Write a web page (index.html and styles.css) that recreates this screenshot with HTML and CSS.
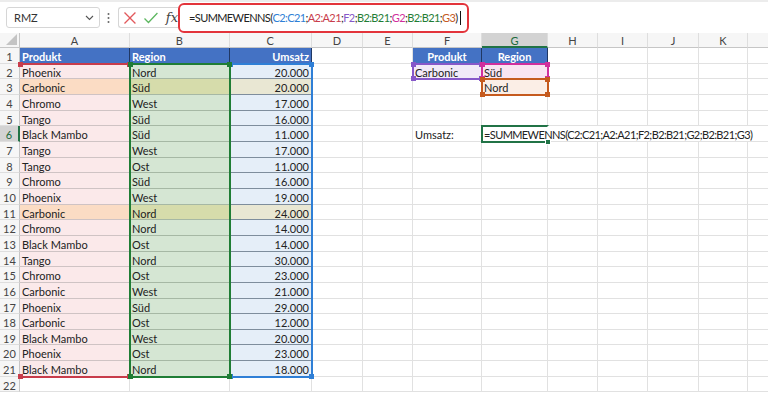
FILE: index.html
```html
<!DOCTYPE html>
<html lang="de">

<head>
    <meta charset="UTF-8">
    <meta name="viewport" content="width=device-width, initial-scale=1.0">
    <title>SUMMEWENNS</title>
    <link rel="stylesheet" href="styles.css">
</head>

<body>
    <div class="formula-bar">
        <div class="name-box">
            <span>RMZ</span>
            <svg width="9" height="6" viewBox="0 0 9 6" fill="none" stroke="#555" stroke-width="1.1">
                <polyline points="1,1 4.5,4.5 8,1"></polyline>
            </svg>
        </div>
        <svg class="dots" width="3" height="12" viewBox="0 0 3 12" fill="#666">
            <circle cx="1.5" cy="2" r="1"></circle>
            <circle cx="1.5" cy="6" r="1"></circle>
            <circle cx="1.5" cy="10" r="1"></circle>
        </svg>
        <div class="fx-buttons">
            <svg width="14" height="14" viewBox="0 0 14 14" fill="none" stroke="#e2595c" stroke-width="1.3">
                <path d="M1.5 1.5 L12.5 12.5 M12.5 1.5 L1.5 12.5"></path>
            </svg>
            <svg width="16" height="14" viewBox="0 0 16 14" fill="none" stroke="#5db760" stroke-width="1.3">
                <polyline points="1.5,7.5 5.5,11.5 14.5,2"></polyline>
            </svg>
            <span class="fx">fx</span>
        </div>
        <div class="formula-input">
            <span>=SUMMEWENNS(</span><span class="ref-blue">C2:C21</span><span>;</span><span class="ref-red">A2:A21</span><span>;</span><span class="ref-purple">F2</span><span>;</span><span class="ref-green">B2:B21</span><span>;</span><span class="ref-magenta">G2</span><span>;</span><span class="ref-green">B2:B21</span><span>;</span><span class="ref-orange">G3</span><span>)</span><span class="caret"></span>
        </div>
    </div>

    <div class="sheet">
        <div class="cells" id="cells"></div>
        <div class="marks">
            <div class="range range-c"><i class="tl"></i><i class="tr"></i><i class="bl"></i><i class="br"></i></div>
            <div class="range range-a"><i class="tl"></i><i class="tr"></i><i class="bl"></i><i class="br"></i></div>
            <div class="range range-f2"><i class="tl"></i><i class="tr"></i><i class="bl"></i><i class="br"></i></div>
            <div class="range range-b"><i class="tl"></i><i class="tr"></i><i class="bl"></i><i class="br"></i></div>
            <div class="range range-g2"><i class="tl"></i><i class="tr"></i><i class="bl"></i><i class="br"></i></div>
            <div class="range range-g3"><i class="tl"></i><i class="tr"></i><i class="bl"></i><i class="br"></i></div>
            <div class="active-cell"><i class="handle"></i></div>
        </div>
    </div>

    <script>
        const sales = [
            ['Phoenix', 'Nord', '20.000'],
            ['Carbonic', 'Süd', '20.000'],
            ['Chromo', 'West', '17.000'],
            ['Tango', 'Süd', '16.000'],
            ['Black Mambo', 'Süd', '11.000'],
            ['Tango', 'West', '17.000'],
            ['Tango', 'Ost', '11.000'],
            ['Chromo', 'Süd', '16.000'],
            ['Phoenix', 'West', '19.000'],
            ['Carbonic', 'Nord', '24.000'],
            ['Chromo', 'Nord', '14.000'],
            ['Black Mambo', 'Ost', '14.000'],
            ['Tango', 'Nord', '30.000'],
            ['Chromo', 'Ost', '23.000'],
            ['Carbonic', 'West', '21.000'],
            ['Phoenix', 'Süd', '29.000'],
            ['Carbonic', 'Ost', '12.000'],
            ['Black Mambo', 'West', '20.000'],
            ['Phoenix', 'Ost', '23.000'],
            ['Black Mambo', 'Nord', '18.000']
        ];
        const highlighted = [3, 11];
        const letters = ['A', 'B', 'C', 'D', 'E', 'F', 'G', 'H', 'I', 'J', 'K', 'L'];
        const cells = document.getElementById('cells');

        function add(cls, text) {
            const div = document.createElement('div');
            div.className = 'cell ' + cls;
            if (text) div.textContent = text;
            cells.appendChild(div);
        }

        add('corner');
        letters.forEach(l => add(l === 'G' ? 'col-head sel' : 'col-head', l === 'L' ? '' : l));

        for (let r = 1; r <= 22; r++) {
            add(r === 6 ? 'row-head sel' : 'row-head', r);

            if (r === 1) {
                add('th', 'Produkt');
                add('th', 'Region');
                add('th right', 'Umsatz');
            } else if (r <= 21) {
                const [product, region, amount] = sales[r - 2];
                const hl = highlighted.includes(r) ? ' hl' : '';
                add('col-a' + hl, product);
                add('col-b' + hl, region);
                add('col-c right' + hl, amount);
            } else {
                add('');
                add('');
                add('');
            }

            add('');
            add('');

            if (r === 1) {
                add('th center', 'Produkt');
                add('th center', 'Region');
            } else if (r === 2) {
                add('crit-f2', 'Carbonic');
                add('crit-g2', 'Süd');
            } else if (r === 3) {
                add('');
                add('crit-g3', 'Nord');
            } else if (r === 6) {
                add('', 'Umsatz:');
                add('overflow', '=SUMMEWENNS(C2:C21;A2:A21;F2;B2:B21;G2;B2:B21;G3)');
                continue;
            } else {
                add('');
                add('');
            }

            for (let i = 0; i < 5; i++) add('');
        }
    </script>
</body>

</html>
```

FILE: styles.css
```css
*,
*::before,
*::after {
    box-sizing: border-box;
    margin: 0;
    padding: 0;
}

:root {
    --grid: #e1e1e1;
    --head-line: #c6c6c6;
    --excel-green: #217346;
    --blue: #2f7fd6;
    --red: #c83c4b;
    --purple: #8658c9;
    --green: #1f7d35;
    --magenta: #d12f9d;
    --orange: #c55a1e;
    --table-blue: #4472c4;
}

html,
body {
    width: 768px;
    height: 393px;
    overflow: hidden;
}

body {
    font-family: Lato, "Noto Sans", sans-serif;
    font-size: 11px;
    color: #222;
    background-color: #fff;
}

/* formula bar */

.formula-bar {
    height: 33px;
    display: flex;
    align-items: center;
    border-top: 2px solid #ececec;
    padding-left: 6px;
}

.name-box {
    width: 94px;
    height: 21px;
    display: flex;
    align-items: center;
    justify-content: space-between;
    padding: 0 5px 0 7px;
    border: 1px solid #d6d6d6;
    border-radius: 3px;
    font-size: 11px;
    color: #333;
}

.dots {
    margin: 0 8px 0 7px;
}

.fx-buttons {
    width: 60px;
    height: 21px;
    display: flex;
    align-items: center;
    gap: 6px;
    padding-left: 4px;
    border: 1px solid #d6d6d6;
    border-right: none;
    border-radius: 3px 0 0 3px;
}

.fx {
    font-family: "DejaVu Serif", "Liberation Serif", serif;
    font-style: italic;
    font-size: 13px;
    color: #444;
    margin-left: 1px;
}

.formula-input {
    width: 291px;
    height: 30px;
    display: flex;
    align-items: center;
    padding-left: 9px;
    border: 2px solid #e3343b;
    border-radius: 6px;
    white-space: nowrap;
    letter-spacing: -0.6px;
    color: #222;
}

.caret {
    width: 1px;
    height: 14px;
    margin-left: 2px;
    background-color: #111;
}

.ref-blue { color: var(--blue); }
.ref-red { color: var(--red); }
.ref-purple { color: var(--purple); }
.ref-green { color: var(--green); }
.ref-magenta { color: var(--magenta); }
.ref-orange { color: var(--orange); }

/* sheet */

.sheet {
    display: grid;
}

.cells,
.marks {
    grid-area: 1 / 1;
    display: grid;
    grid-template-columns: 20px 110px 99.5px 82.5px 51px 50px 69px 66px 50px 50px 51px 49px 50px;
    grid-template-rows: 15px repeat(22, 15.67px);
}

.marks {
    pointer-events: none;
}

.cell {
    border-right: 1px solid var(--grid);
    border-bottom: 1px solid var(--grid);
    padding: 2px 2px 0;
    line-height: 13px;
    white-space: nowrap;
}

.corner {
    display: flex;
    justify-content: flex-end;
    align-items: flex-end;
    padding: 2px;
    background-color: #f6f6f6;
    border-right-color: var(--head-line);
    border-bottom-color: var(--head-line);
}

.corner::after {
    content: "";
    width: 11px;
    height: 11px;
    background-color: #c4c4c4;
    clip-path: polygon(100% 0, 100% 100%, 0 100%);
}

.col-head,
.row-head {
    background-color: #f6f6f6;
    color: #444;
    font-size: 11px;
    text-align: center;
}

.col-head {
    padding-top: 1px;
    border-right-color: #dedede;
    border-bottom-color: var(--head-line);
}

.row-head {
    padding: 2px 0 0;
    border-right-color: var(--head-line);
    border-bottom-color: #dedede;
}

.col-head.sel {
    background-color: #d3d3d3;
    color: #1d6a3c;
    border-bottom: 2px solid var(--excel-green);
}

.row-head.sel {
    background-color: #d3d3d3;
    color: #1d6a3c;
    border-right: 2px solid var(--excel-green);
}

.th {
    background-color: var(--table-blue);
    color: #fff;
    font-weight: 700;
    border-right-color: #203864;
    border-bottom-color: var(--table-blue);
}

.right {
    text-align: right;
}

.center {
    text-align: center;
}

.col-a {
    background-color: #fbe9ea;
    border-bottom-color: #cfc3c4;
}

.col-b {
    background-color: #d5e6d3;
    border-bottom-color: #a6b8a4;
}

.col-c {
    background-color: #e5eef8;
    border-bottom-color: #7e8d9c;
}

.col-a.hl {
    background-color: #fbdcc4;
}

.col-b.hl {
    background-color: #d6dcab;
}

.col-c.hl {
    background-color: #e9e7d3;
}

.crit-f2 {
    background-color: #f1eaf8;
}

.crit-g2 {
    background-color: #f9e4f1;
}

.crit-g3 {
    background-color: #fbeee6;
}

.overflow {
    grid-column: span 6;
    border-right: none;
    letter-spacing: -0.6px;
}

/* reference highlights */

.range {
    position: relative;
    margin: -1px;
    border: 2px solid var(--c);
}

.range i {
    position: absolute;
    width: 5px;
    height: 5px;
    background-color: var(--c);
}

.range .tl { left: -3px; top: -3px; }
.range .tr { right: -3px; top: -3px; }
.range .bl { left: -3px; bottom: -3px; }
.range .br { right: -3px; bottom: -3px; }

.range-a {
    --c: var(--red);
    grid-column: 2;
    grid-row: 3 / 23;
    border-left-color: transparent;
}

.range-b {
    --c: var(--green);
    grid-column: 3;
    grid-row: 3 / 23;
}

.range-c {
    --c: var(--blue);
    grid-column: 4;
    grid-row: 3 / 23;
}

.range-f2 {
    --c: var(--purple);
    grid-column: 7;
    grid-row: 3;
}

.range-g2 {
    --c: var(--magenta);
    grid-column: 8;
    grid-row: 3;
}

.range-g3 {
    --c: var(--orange);
    grid-column: 8;
    grid-row: 4;
}

.active-cell {
    position: relative;
    grid-column: 8;
    grid-row: 7;
    margin: -1px;
    border: 2px solid var(--excel-green);
    border-right-color: transparent;
}

.handle {
    position: absolute;
    right: -4px;
    bottom: -4px;
    width: 6px;
    height: 6px;
    background-color: var(--excel-green);
    border: 1px solid #fff;
}
```
